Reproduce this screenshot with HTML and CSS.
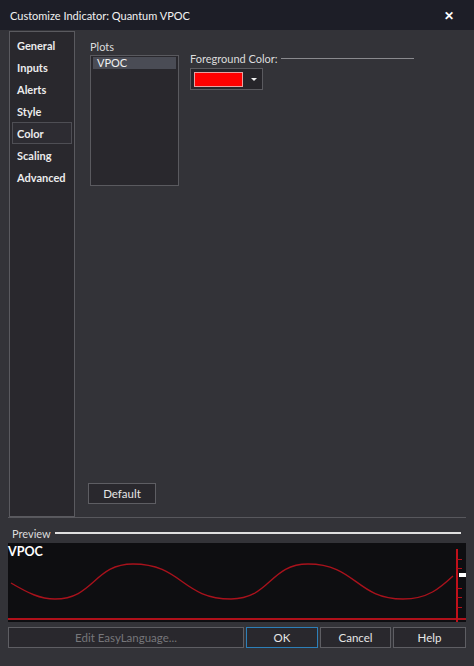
FILE: index.html
```html
<!DOCTYPE html>
<html lang="en">

<head>
    <meta charset="UTF-8">
    <title>Customize Indicator: Quantum VPOC</title>
    <link rel="stylesheet" href="styles.css">
</head>

<body>
    <div class="dialog">
        <div class="titlebar">
            <span class="title">Customize Indicator: Quantum VPOC</span>
            <span class="close">&#x2715;</span>
        </div>

        <div class="main">
            <div class="sidebar">
                <div class="tab">General</div>
                <div class="tab">Inputs</div>
                <div class="tab">Alerts</div>
                <div class="tab">Style</div>
                <div class="tab active">Color</div>
                <div class="tab">Scaling</div>
                <div class="tab">Advanced</div>
            </div>

            <div class="content">
                <div class="row">
                    <div class="plots">
                        <div class="label">Plots</div>
                        <div class="plot-list">
                            <div class="plot-item">VPOC</div>
                        </div>
                    </div>
                    <div class="colors">
                        <div class="group-head">
                            <span class="label">Foreground Color:</span>
                            <span class="rule"></span>
                        </div>
                        <div class="color-pick">
                            <span class="swatch"></span>
                            <span class="arrow"></span>
                        </div>
                    </div>
                </div>
                <button class="btn default-btn">Default</button>
            </div>
        </div>

        <div class="preview">
            <div class="group-head preview-head">
                <span class="label">Preview</span>
                <span class="rule bright"></span>
            </div>
            <div class="chart">
                <span class="chart-name">VPOC</span>
                <svg class="chart-svg" width="458" height="79" viewBox="0 0 458 79">
                    <path d="M3,40 C20,50 32,56 47,56 C86,56 86,21 125,21 C174,21 174,56 223,56 C262,56 262,21 300,21 C348,21 348,56 395,56 C420,56 432,45 445,33"
                        fill="none" stroke="#a8121c" stroke-width="1.4" />
                    <line x1="0" y1="76" x2="458" y2="76" stroke="#b0101a" stroke-width="2" />
                    <line x1="449" y1="6" x2="449" y2="79" stroke="#c0101a" stroke-width="2" />
                    <g stroke="#b0101a" stroke-width="1">
                        <line x1="449" y1="16.5" x2="454" y2="16.5" />
                        <line x1="449" y1="25.5" x2="454" y2="25.5" />
                        <line x1="449" y1="45.5" x2="454" y2="45.5" />
                        <line x1="449" y1="54.5" x2="454" y2="54.5" />
                        <line x1="449" y1="64.5" x2="454" y2="64.5" />
                    </g>
                    <rect x="451" y="30" width="7" height="4" fill="#ffffff" />
                </svg>
            </div>
            <div class="buttons">
                <button class="btn edit-btn">Edit EasyLanguage...</button>
                <button class="btn ok-btn">OK</button>
                <button class="btn cancel-btn">Cancel</button>
                <button class="btn help-btn">Help</button>
            </div>
        </div>
    </div>
</body>

</html>
```

FILE: styles.css
```css
body {
    margin: 0;
    background: #333338;
    font-family: Lato, "Open Sans", sans-serif;
    font-size: 11px;
    color: #e6e6e6;
}

.dialog {
    width: 474px;
    height: 666px;
    display: flex;
    flex-direction: column;
    background: #333338;
}

.titlebar {
    height: 30px;
    flex: none;
    display: flex;
    align-items: center;
    justify-content: space-between;
    padding: 0 20px 0 10px;
    background: #1d1e27;
    color: #f2f2f2;
    font-size: 11px;
}

.close {
    font-size: 12px;
    font-weight: 700;
    color: #ffffff;
}

.main {
    height: 486px;
    flex: none;
    display: flex;
    margin: 0 8px;
    padding: 1px 0 0 1px;
    border-bottom: 1px solid #58585d;
}

.sidebar {
    width: 66px;
    height: 486px;
    flex: none;
    padding-top: 2px;
    box-sizing: border-box;
    border: 1px solid #5a5a5f;
    background: #29282d;
}

.tab {
    height: 22px;
    line-height: 21px;
    margin: 0 2px;
    padding-left: 4px;
    border: 1px solid transparent;
    box-sizing: border-box;
    font-weight: 700;
    color: #ececec;
}

.tab.active {
    border-color: #4e4e54;
    background: #2d2c32;
}

.content {
    flex: 1;
    display: flex;
    flex-direction: column;
    padding: 8px 0 0 15px;
}

.row {
    display: flex;
}

.label {
    color: #dcdcdc;
}

.plots .label {
    height: 16px;
    line-height: 15px;
}

.plot-list {
    width: 89px;
    height: 131px;
    box-sizing: border-box;
    border: 1px solid #5a5a5f;
    background: #29282d;
    padding: 1px 2px;
}

.plot-item {
    height: 12px;
    line-height: 12px;
    padding-left: 4px;
    background: #4a4c55;
    color: #f0f0f0;
}

.colors {
    margin: 13px 0 0 11px;
    width: 224px;
}

.group-head {
    display: flex;
    align-items: center;
    gap: 3px;
}

.rule {
    flex: 1;
    height: 1px;
    background: #8a8a8e;
}

.rule.bright {
    height: 2px;
    background: #e0e0e0;
}

.color-pick {
    width: 73px;
    height: 22px;
    margin-top: 3px;
    box-sizing: border-box;
    border: 1px solid #5a5a5f;
    background: #26252a;
    display: flex;
    align-items: center;
    padding-left: 3px;
}

.swatch {
    width: 49px;
    height: 15px;
    box-sizing: border-box;
    border: 1px solid #e8a0a0;
    background: #ff0000;
}

.arrow {
    margin-left: 8px;
    width: 0;
    height: 0;
    border-left: 3px solid transparent;
    border-right: 3px solid transparent;
    border-top: 3px solid #f0f0f0;
}

.btn {
    font-family: inherit;
    font-size: 11.5px;
    color: #e6e6e6;
    background: #29282d;
    border: 1px solid #5e5e63;
    padding: 0;
    height: 21px;
    box-sizing: border-box;
}

.default-btn {
    width: 68px;
    margin: auto 0 13px -2px;
}

.preview {
    flex: 1;
    display: flex;
    flex-direction: column;
}

.preview-head {
    height: 16px;
    margin: 7px 13px 2px 12px;
    gap: 4px;
}

.chart {
    position: relative;
    height: 79px;
    margin: 0 8px;
    background: #0e0e11;
}

.chart-name {
    position: absolute;
    left: 0;
    top: 1px;
    font-weight: 700;
    font-size: 12.5px;
    color: #ffffff;
}

.chart-svg {
    display: block;
}

.buttons {
    display: flex;
    gap: 2px;
    margin: 5px 8px 0;
}

.edit-btn {
    width: 236px;
    color: #76767a;
}

.ok-btn {
    width: 72px;
    border-color: #2d7fb8;
}

.cancel-btn {
    width: 71px;
}

.help-btn {
    width: 73px;
}
```
